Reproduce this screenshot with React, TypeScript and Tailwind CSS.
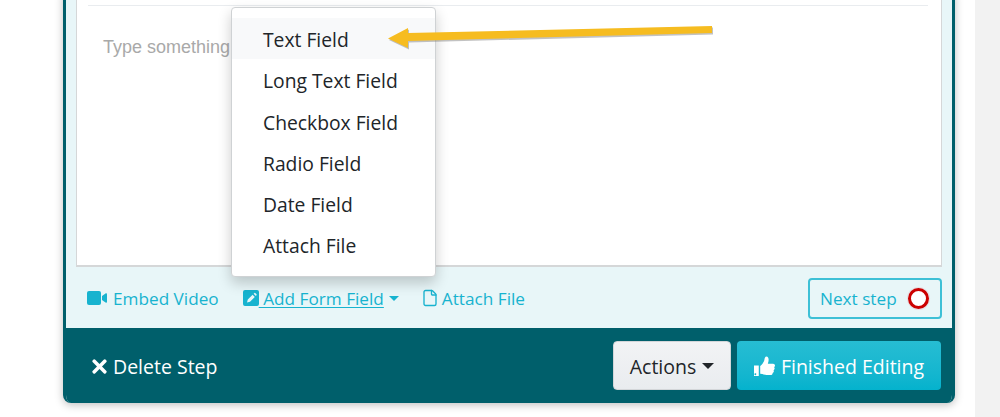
import { File } from "lucide-react"

const fieldTypes = ["Text Field", "Long Text Field", "Checkbox Field", "Radio Field", "Date Field", "Attach File"]

function VideoSolid() {
  return (
    <svg viewBox="0 0 20 16" className="h-[16px] w-[20px] fill-[#17b3cf]">
      <path d="M2 1h10a2 2 0 0 1 2 2v10a2 2 0 0 1-2 2H2a2 2 0 0 1-2-2V3a2 2 0 0 1 2-2Z" />
      <path d="M15 6l3.500-2.500c.6-.4 1.500 0 1.500.8v7.400c0 .8-.9 1.200-1.500.8L15 10V6Z" />
    </svg>
  )
}

function PenSquare() {
  return (
    <svg viewBox="0 0 16 16" className="h-[16px] w-[16px] fill-[#17b3cf]">
      <path d="M2 0h12a2 2 0 0 1 2 2v12a2 2 0 0 1-2 2H2a2 2 0 0 1-2-2V2a2 2 0 0 1 2-2Zm7.600 4.700L4.800 9.500 4 12.500l3-.8 4.800-4.800-2.200-2.200Zm1-1 2.200 2.200.5-.5a1 1 0 0 0 0-1.400l-.8-.8a1 1 0 0 0-1.400 0l-.5.5Z" fillRule="evenodd" />
    </svg>
  )
}

function ThumbUp() {
  return (
    <svg viewBox="0 0 22 22" className="h-[21px] w-[21px] fill-white">
      <path d="M0 10h5v11H0V10Zm2 8.200a1 1 0 1 0 0 1.600 1 1 0 0 0 0-1.600Z" fillRule="evenodd" />
      <path d="M6.500 10.500c2.300-2 4-4 4.500-7 .2-1.500.7-3 2-3 2.500 0 3 3.500 1.500 7.500H20c1.200 0 2 .9 2 2 0 .8-.5 1.500-1 1.800.5.4.7 1 .6 1.600-.1.700-.5 1.200-1.100 1.500.3.500.4 1 .2 1.600-.2.600-.6 1-1.200 1.200.2 1.300-.7 2.300-2 2.300h-2.500c-3 0-5-1-8.500-1.500V10.500Z" />
    </svg>
  )
}

function CloseBold() {
  return (
    <svg viewBox="0 0 15 15" className="h-[15px] w-[15px] fill-white">
      <path d="M3.300.8 7.500 5 11.700.8a1.500 1.500 0 0 1 2.100 0l.4.400a1.500 1.500 0 0 1 0 2.100L10 7.500l4.200 4.200a1.500 1.500 0 0 1 0 2.100l-.4.400a1.500 1.500 0 0 1-2.100 0L7.500 10l-4.200 4.200a1.500 1.500 0 0 1-2.100 0l-.4-.4a1.500 1.500 0 0 1 0-2.100L5 7.500.8 3.300a1.500 1.500 0 0 1 0-2.100l.4-.4a1.500 1.500 0 0 1 2.100 0Z" />
    </svg>
  )
}

export default function App() {
  return (
    <div className="relative flex h-[417px] w-[1000px] overflow-hidden bg-white font-['Open_Sans','Noto_Sans',sans-serif]">
      <div className="ml-[63px] mt-[-8px] h-[411px] w-[892px] shrink-0 overflow-hidden rounded-b-lg border-x-[3px] border-[#005f6b] bg-[#e8f6f8] shadow-[0_2px_8px_rgba(0,0,0,0.25)]">
        <div className="flex h-[336px] flex-col px-[10px]">
          <div className="relative h-[275px] shrink-0 border-x border-b-2 border-[#d5d7d8] bg-white pl-[11px] pr-[13px]">
            <div className="mt-[13px] border-b border-[#e9ecef]" />
            <p className="mt-[28px] pl-[15px] font-['Liberation_Sans',sans-serif] text-[18px] text-[#a9a9a9]">Type something</p>
            <div className="absolute left-[154px] top-[15px] w-[205px] rounded border border-[#cfd2d4] bg-white py-[10px] shadow-[0_6px_14px_rgba(0,0,0,0.2)]">
              {fieldTypes.map((field, i) => (
                <div key={field} className={`h-[41.300px] pl-[31px] pt-[1px] text-[19.300px] leading-[41px] text-[#212529] ${i === 0 ? "bg-[#f8f9fa]" : ""}`}>
                  {field}
                </div>
              ))}
            </div>
          </div>
          <div className="flex flex-1 items-center justify-between pt-[2px] pl-[11px] text-[17.200px] text-[#17b3cf]">
            <div className="flex items-center">
              <span className="flex items-center gap-[6px]">
                <VideoSolid />
                Embed Video
              </span>
              <span className="ml-[24px] flex items-center">
                <PenSquare />
                <span className="underline underline-offset-2 whitespace-pre"> Add Form Field</span>
                <span className="ml-[5px] mt-[1px] border-x-[5px] border-t-[5px] border-x-transparent border-t-[#17b3cf]" />
              </span>
              <span className="ml-[22px] flex items-center gap-[3px]">
                <File className="h-[20px] w-[18px]" strokeWidth={1.800} />
                Attach File
              </span>
            </div>
            <div className="flex h-[41px] w-[134px] items-center justify-between rounded border-2 border-[#3dc0d6] pl-[10px] pr-[11px]">
              Next step
              <span className="h-[21px] w-[21px] rounded-full border-[3px] border-[#cc0000] bg-white shadow-[0_0_0_1px_rgba(230,220,225,0.9)]" />
            </div>
          </div>
        </div>
        <div className="flex h-[75px] items-center justify-between bg-[#005f6b] pl-[11px] pr-[11px] text-[19.500px]">
          <div className="flex items-center gap-[6px] pl-[15px] pt-[2px] text-white">
            <CloseBold />
            Delete Step
          </div>
          <div className="flex gap-[6px]">
            <div className="flex h-[49px] w-[118px] items-center justify-center gap-[6px] rounded border border-[#d3d6d9] bg-gradient-to-b from-[#f2f3f5] to-[#e9ecef] pt-[2px] text-[#212529]">
              Actions
              <span className="mb-[2px] border-x-[6px] border-t-[6px] border-x-transparent border-t-[#212529]" />
            </div>
            <div className="flex h-[49px] w-[204px] items-center justify-center gap-[6px] rounded bg-gradient-to-b from-[#26bdd3] to-[#04b2cd] pt-[2px] text-white">
              <ThumbUp />
              Finished Editing
            </div>
          </div>
        </div>
      </div>
      <div className="ml-[20px] flex-1 bg-[#f2f2f2]" />
      <svg viewBox="0 0 340 40" className="absolute left-[380px] top-[18px] h-[40px] w-[340px]">
        <path d="M8 20.500 L28 10 L28 15 L332 8 L332 15 L28 23 L28 30 Z" fill="#777" opacity="0.45" transform="translate(1 1.500)" />
        <path d="M8 20.500 L28 10 L28 15 L332 8 L332 15 L28 23 L28 30 Z" fill="#f6bc20" />
      </svg>
    </div>
  )
}
